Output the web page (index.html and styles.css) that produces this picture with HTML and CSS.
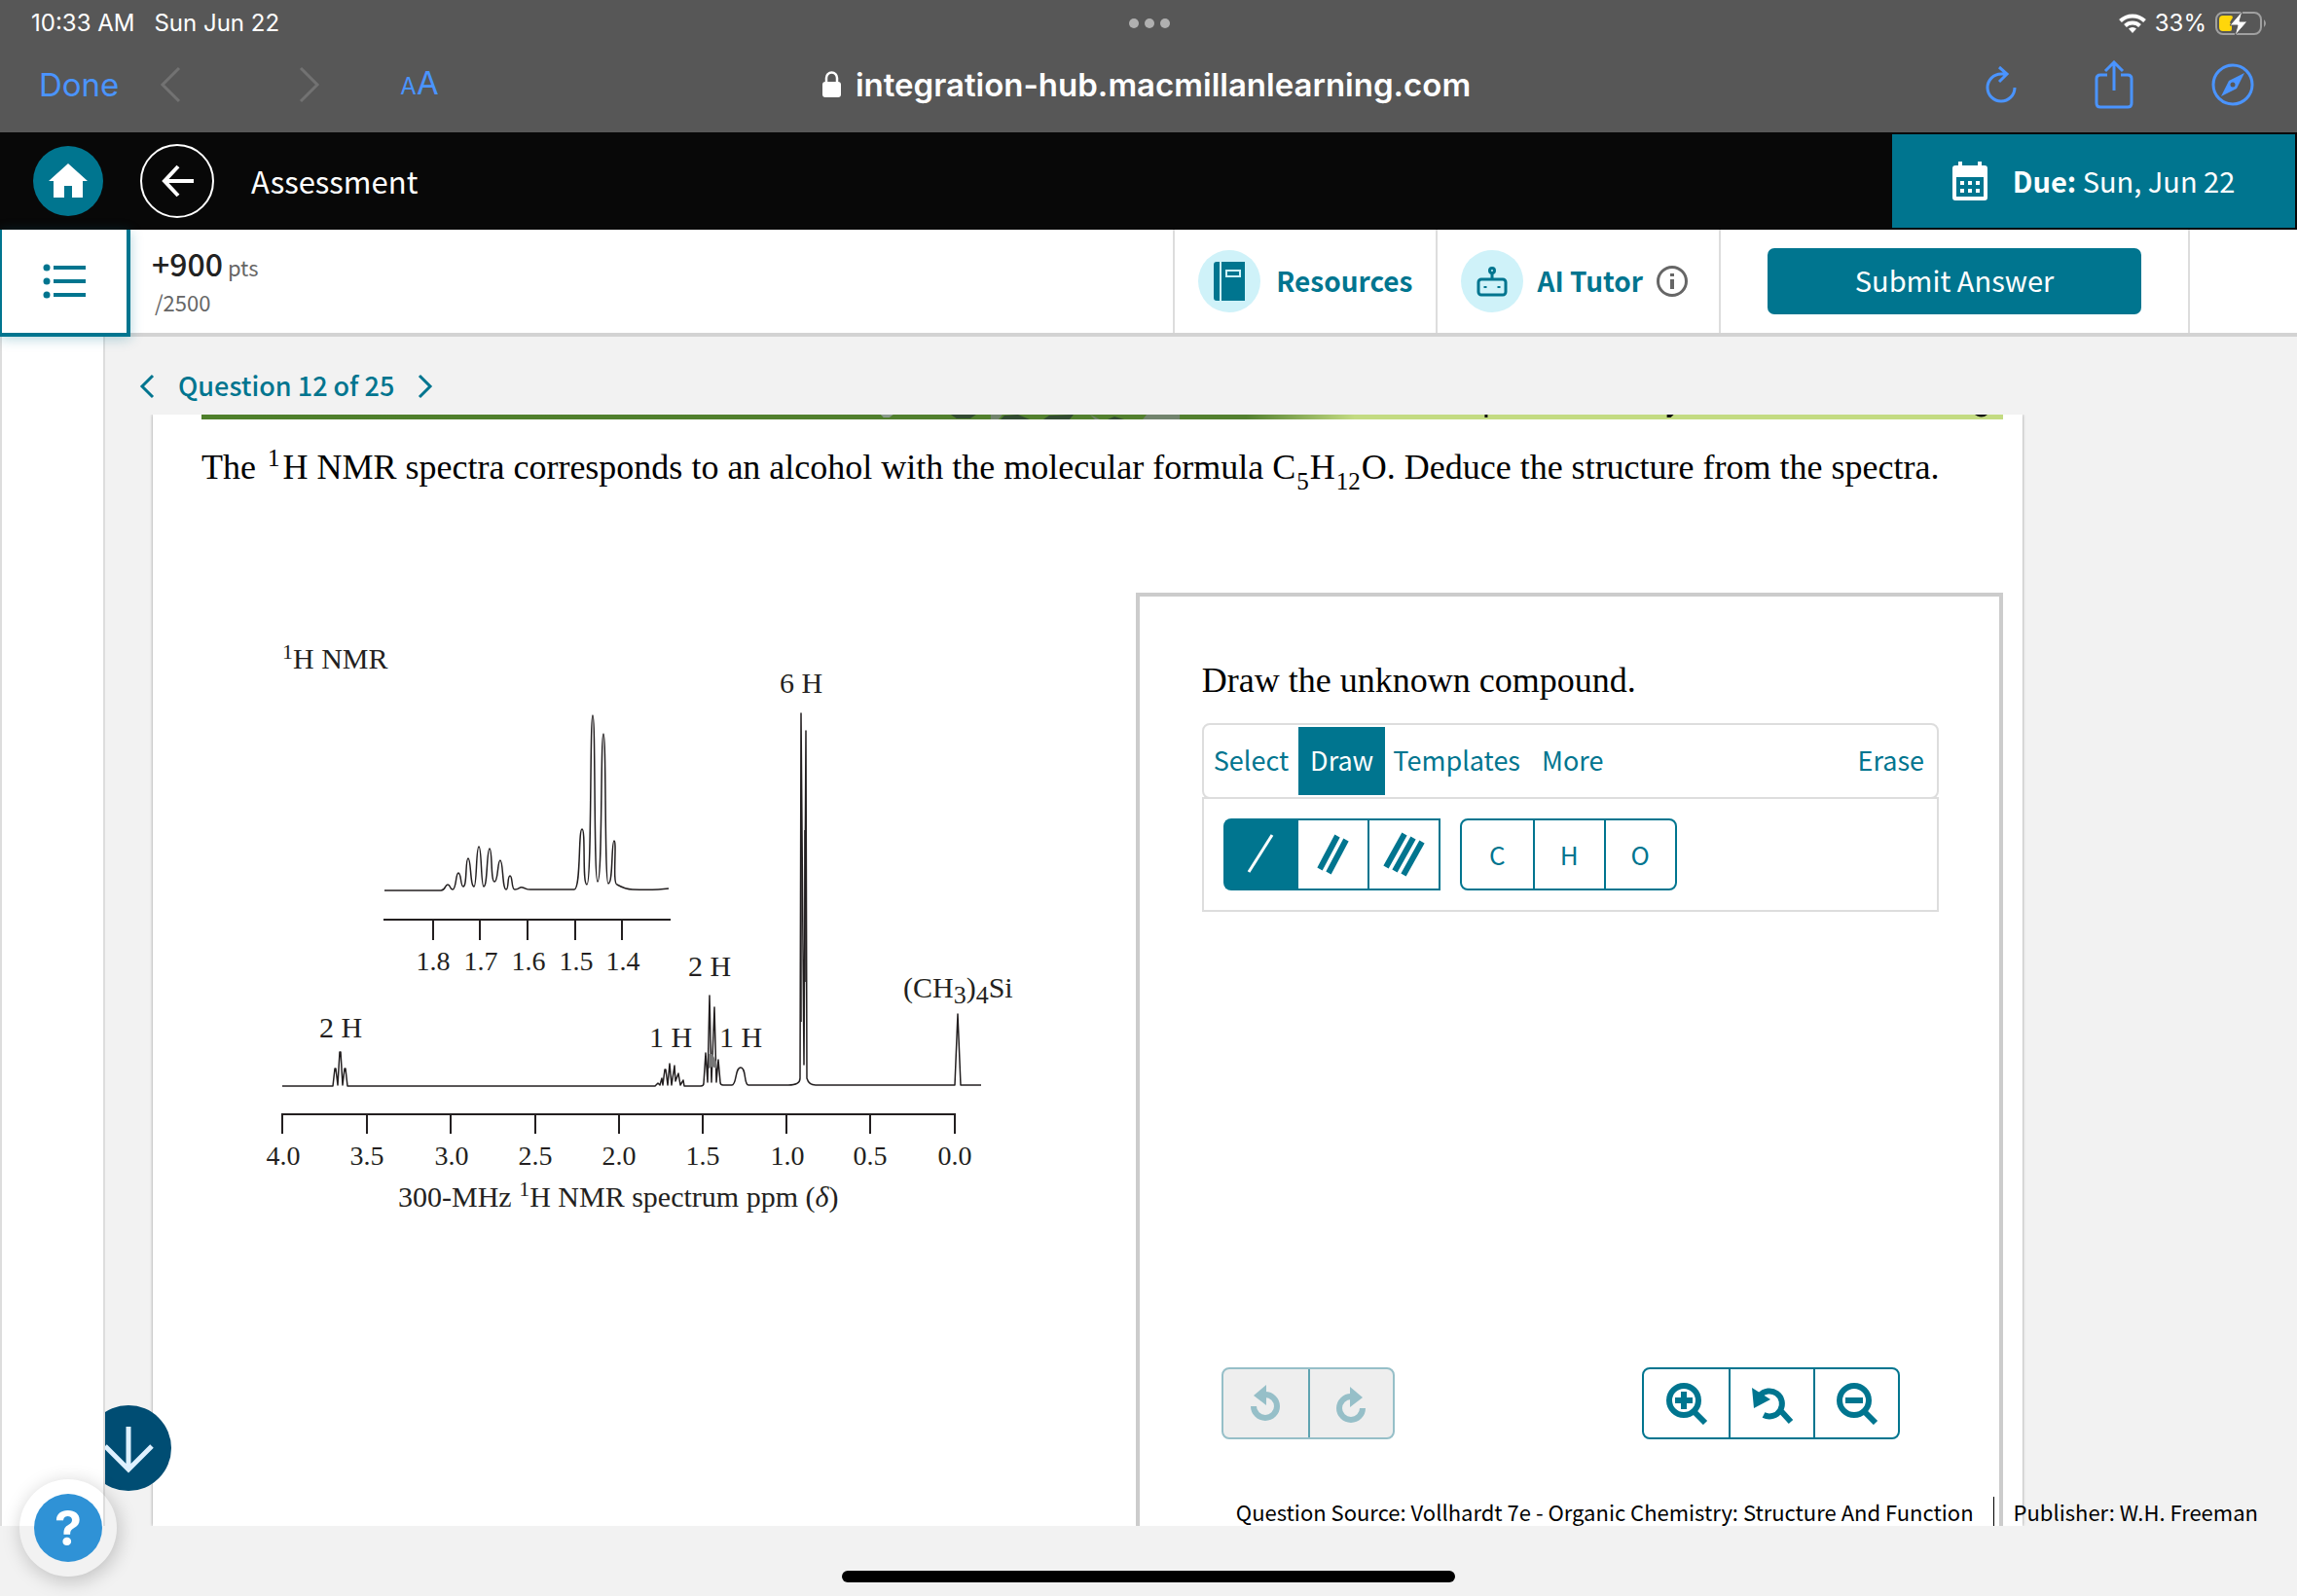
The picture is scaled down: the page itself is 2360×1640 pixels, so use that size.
FILE: index.html
```html
<!DOCTYPE html>
<html lang="en">
<head>
<meta charset="UTF-8">
<meta name="viewport" content="width=device-width, initial-scale=1.0">
<title>Assessment</title>
<link rel="stylesheet" href="styles.css">
</head>
<body>
<div class="browser">
    <div class="status">
        <div class="status-left"><span>10:33 AM</span><span>Sun Jun 22</span></div>
        <div class="dots"><i></i><i></i><i></i></div>
        <div class="status-right">
            <svg width="28" height="20" viewBox="0 0 28 20" fill="none" stroke="#fff" stroke-width="4"><path d="M1.5 7.5a18 18 0 0 1 25 0M6.5 12.5a11 11 0 0 1 15 0"/><path d="M14 20l-4-4.500a6 6 0 0 1 8 0z" fill="#fff" stroke="none"/></svg>
            <span>33%</span>
            <svg width="54" height="26" viewBox="0 0 54 26"><rect x="1" y="2" width="46" height="22" rx="7" fill="none" stroke="#a0a0a0" stroke-width="2"/><path d="M50 9q4 4 0 8z" fill="#a0a0a0"/><path d="M8 5h8q2 0 2 2l-3 5 2 3v4q0 2-2 2H8q-4 0-4-4V9q0-4 4-4z" fill="#ffd60a"/><path d="M28 0L15 15h8l-3 11 13-15h-8z" fill="#fff" stroke="#575757" stroke-width="1"/></svg>
        </div>
    </div>
    <div class="toolbar">
        <div class="tools-left">
            <button class="done">Done</button>
            <button class="step" aria-label="Back"><svg width="22" height="38" viewBox="0 0 22 38"><path d="M20 2L3 19l17 17"/></svg></button>
            <button class="step" aria-label="Forward"><svg width="22" height="38" viewBox="0 0 22 38"><path d="M2 2l17 17L2 36"/></svg></button>
            <button class="size" aria-label="Text size"><small>A</small>A</button>
        </div>
        <div class="address">
            <svg width="20" height="28" viewBox="0 0 20 28"><rect x="0" y="11" width="19" height="16" rx="3" fill="#fff"/><path d="M4 12V7a5.500 5.500 0 0 1 11 0v5" fill="none" stroke="#fff" stroke-width="2.500"/></svg>
            <span>integration-hub.macmillanlearning.com</span>
        </div>
        <div class="tools-right">
            <button aria-label="Reload"><svg width="32" height="40" viewBox="0 0 32 40"><path d="M30 23a14 14 0 1 1-14-14h6M14 2l8 7-8 8"/></svg></button>
            <button aria-label="Share"><svg width="40" height="50" viewBox="0 0 40 50"><path d="M13 15H6q-4 0-4 4v25q0 4 4 4h28q4 0 4-4V19q0-4-4-4h-7M20 31V3M11 11l9-9 9 9"/></svg></button>
            <button aria-label="Open in Safari"><svg width="44" height="44" viewBox="0 0 44 44"><circle cx="22" cy="22" r="20"/><path d="M34 10L26 26 10 34 18 18z" fill="#4a94ff" stroke="none"/><circle cx="22" cy="22" r="2.500" fill="#575757" stroke="none"/></svg></button>
        </div>
    </div>
</div>

<header class="topbar">
    <a class="home" href="#" aria-label="Home"><svg width="40" height="36" viewBox="0 0 40 36"><path d="M20 0l20 18h-5v17H24V23h-8v12H5V18H0z" fill="#fff"/></svg></a>
    <a class="back" href="#" aria-label="Back"><svg width="34" height="34" viewBox="0 0 34 34"><path d="M18 2L4 17l14 15M4 17h30" fill="none" stroke="#fff" stroke-width="4"/></svg></a>
    <h1>Assessment</h1>
    <div class="due">
        <svg width="36" height="40" viewBox="0 0 36 40"><path d="M6 0h4v4h16V0h4v4h3q3 0 3 3v30q0 3-3 3H3q-3 0-3-3V7q0-3 3-3h3z" fill="#fff"/><path d="M4 16h28v20H4z" fill="#00758f"/><path d="M8 20h4v4H8zM16 20h4v4h-4zM24 20h4v4h-4zM8 28h4v4H8zM16 28h4v4h-4zM24 28h4v4h-4z" fill="#fff"/></svg>
        <span><b>Due:</b> Sun, Jun 22</span>
    </div>
</header>

<div class="actions">
    <button class="list" aria-label="Question list"><svg width="44" height="36" viewBox="0 0 44 36" fill="#00758f"><circle cx="4" cy="4" r="3.500"/><circle cx="4" cy="18" r="3.500"/><circle cx="4" cy="32" r="3.500"/><path d="M11 2h33v4H11zM11 16h33v4H11zM11 30h33v4H11z"/></svg></button>
    <div class="points">
        <div><strong>+900</strong> pts</div>
        <div class="total">/2500</div>
    </div>
    <a class="action resources" href="#">
        <span class="bubble"><svg width="32" height="40" viewBox="0 0 32 40"><path d="M3 0h3v40H3q-3 0-3-3V3q0-3 3-3zM8 0h24v40H8z" fill="#00758f"/><path d="M13 9h14v6H13z" fill="none" stroke="#cff2f9" stroke-width="2"/></svg></span>
        <span class="label">Resources</span>
    </a>
    <a class="action tutor" href="#">
        <span class="bubble"><svg class="robot" width="32" height="32" viewBox="0 0 32 32" fill="none" stroke="#00758f" stroke-width="3"><rect x="2" y="14" width="28" height="16" rx="3"/><circle cx="16" cy="5" r="2.500"/><path d="M16 7v7M9 21v2M23 21v2"/></svg></span>
        <span class="label">AI Tutor</span>
        <svg width="32" height="32" viewBox="0 0 32 32"><circle cx="16" cy="16" r="14.500" fill="none" stroke="#666" stroke-width="3"/><path d="M14 8h4v3h-4zM14 14h4v10h-4z" fill="#666"/></svg>
    </a>
    <div class="submit-cell"><button class="submit">Submit Answer</button></div>
</div>

<div class="workspace">
    <aside class="rail"></aside>
    <main>
        <nav class="question-nav">
            <button aria-label="Previous question"><svg width="16" height="26" viewBox="0 0 16 26"><path d="M14 2L3 13l11 11"/></svg></button>
            <span class="label">Question 12 of 25</span>
            <button aria-label="Next question"><svg width="16" height="26" viewBox="0 0 16 26"><path d="M2 2l11 11L2 24"/></svg></button>
        </nav>
        <section class="sheet">
            <svg class="banner" viewBox="0 0 1849 5" preserveAspectRatio="none">
                <defs><linearGradient id="grass"><stop offset="0" stop-color="#4e7f2b"/><stop offset="0.580" stop-color="#53802f"/><stop offset="0.640" stop-color="#c3db82"/><stop offset="1" stop-color="#c3db82"/></linearGradient></defs>
                <path d="M0 0h1849v5H0z" fill="url(#grass)"/>
                <path d="M697 0h13l-4 3h-6z" fill="#8a9a8c"/>
                <path d="M769 0h26l-6 4h-14zM820 5l4-4 14-1 12 5zM864 5l6-4 25-1-4 5zM930 5l7-3 10 3z" fill="#324b31"/>
                <path d="M810 0h12l-4 5h-8zM912 0l10 5h-5zM970 0h34v5h-38z" fill="#72846d"/>
                <path d="M1317 0h3v3h-3zM1504 0h7l-3 3h-4zM1820 0h13q-6 5-13 0z" fill="#111"/>
            </svg>
            <p class="prompt">The <sup>1</sup>H NMR spectra corresponds to an alcohol with the molecular formula C<sub>5</sub>H<sub>12</sub>O. Deduce the structure from the spectra.</p>
            <div class="columns">
                <div class="figure">
                    <svg class="spectrum" viewBox="260 640 800 620" role="img" aria-label="NMR spectrum">
                        <g class="trace">
                            <!-- inset, 1.9 to 1.3 ppm -->
                            <path d="M395 915H453C458 915 457 909 460 909S462 914 465 914C469 914 468 897 471 897S473 911 476 911C480 911 478 882 481 882S483 911 487 911C490 911 489 870 492 870S494 911 497 911C501 911 500 872 503 872S504 906 508 906C512 906 511 884 514 884S516 914 520 914C523 914 521 900 524 900S525 914 529 914C534 914 533 911 537 912S540 914 545 914H590C597 914 594 852 598 852S598 909 603 909C608 909 606 735 609 735S610 906 614 906C619 906 617 754 620 754S621 908 625 908C630 908 628 864 631 864S629 909 634 909C641 913 644 914 650 914Q672 915 687 913"/>
                            <!-- full spectrum -->
                            <path d="M290 1116H342L344 1098 345 1098 347 1115 349 1081 350 1081 352 1115 354 1098 355 1098 357 1116H673L676 1113 678 1115 680 1108 681 1115 683 1099 684 1099 686 1115 688 1093 690 1115 693 1095 694 1111 697 1103 699 1115 702 1110 703 1116H720Q723 1116 723 1113L725 1082 727 1112 729 1023 731 1112 734 1035 736 1112 738 1089 740 1112Q740 1115 743 1115H752C757 1115 755 1097 761 1097S764 1115 769 1115H810Q822 1115 822 1108L823 733 826 1094 828 751 829 1108Q831 1115 838 1115H981L984 1042 987 1115H1008"/>
                            <path class="smudge" d="M728 1083h4l4 8v7l-4-2-4 2z"/>
                            <path d="M823 870v180M827 853v156"/>
                        </g>
                        <g class="axis">
                            <path d="M394 945H689M445 945v21M493 945v21M542 945v21M591 945v21M639 945v21"/>
                            <path d="M290 1165V1145H981V1165M377 1145v20M463 1145v20M550 1145v20M636 1145v20M722 1145v20M808 1145v20M894 1145v20"/>
                        </g>
                        <g class="ticks">
                            <text x="445" y="997">1.8</text><text x="494" y="997">1.7</text><text x="543" y="997">1.6</text><text x="592" y="997">1.5</text><text x="640" y="997">1.4</text>
                            <text x="291" y="1197">4.0</text><text x="377" y="1197">3.5</text><text x="464" y="1197">3.0</text><text x="550" y="1197">2.5</text><text x="636" y="1197">2.0</text><text x="722" y="1197">1.5</text><text x="809" y="1197">1.0</text><text x="894" y="1197">0.5</text><text x="981" y="1197">0.0</text>
                        </g>
                        <g class="labels">
                            <text x="290" y="687"><tspan class="raised" dy="-10">1</tspan><tspan dy="10">H NMR</tspan></text>
                            <text x="328" y="1066">2 H</text>
                            <text x="667" y="1076">1 H</text>
                            <text x="739" y="1076">1 H</text>
                            <text x="707" y="1003">2 H</text>
                            <text x="801" y="712">6 H</text>
                            <text x="928" y="1025">(CH<tspan class="lowered" dy="6">3</tspan><tspan dy="-6">)</tspan><tspan class="lowered" dy="6">4</tspan><tspan dy="-6">Si</tspan></text>
                            <text x="409" y="1240">300-MHz <tspan class="raised" dy="-11">1</tspan><tspan dy="11">H NMR spectrum ppm (</tspan><tspan font-style="italic">δ</tspan>)</text>
                        </g>
                    </svg>
                </div>
                <div class="editor">
                    <p class="task">Draw the unknown compound.</p>
                    <div class="tabs">
                        <button>Select</button>
                        <button class="active">Draw</button>
                        <button>Templates</button>
                        <button>More</button>
                        <button class="erase">Erase</button>
                    </div>
                    <div class="palette">
                        <div class="group">
                            <button class="active" aria-label="Single bond"><svg width="44" height="48" viewBox="0 0 44 48"><path d="M10 43L34 5" stroke="#fff" stroke-width="3"/></svg></button>
                            <button aria-label="Double bond"><svg width="44" height="48" viewBox="0 0 44 48"><path d="M9 40L27 6M18 44L36 10" stroke="#00758f" stroke-width="6"/></svg></button>
                            <button aria-label="Triple bond"><svg width="44" height="48" viewBox="0 0 44 48"><path d="M4 38L23 4M13 42L32 8M22 46L41 12" stroke="#00758f" stroke-width="6"/></svg></button>
                        </div>
                        <div class="group atoms">
                            <button>C</button>
                            <button>H</button>
                            <button>O</button>
                        </div>
                    </div>
                    <div class="controls">
                        <div class="group wide faded">
                            <button disabled aria-label="Undo"><svg width="36" height="42" viewBox="0 0 36 42"><path d="M6 24a12 12 0 1 0 12-12" fill="none" stroke="#96bfc8" stroke-width="6"/><path d="M19 2v21L6 13z" fill="#96bfc8"/></svg></button>
                            <button disabled aria-label="Redo"><svg width="36" height="42" viewBox="0 0 36 42"><path d="M30 26a12 12 0 1 1-12-12" fill="none" stroke="#96bfc8" stroke-width="6"/><path d="M17 4v21l13-10z" fill="#96bfc8"/></svg></button>
                        </div>
                        <div class="group wide">
                            <button aria-label="Zoom in"><svg width="44" height="44" viewBox="0 0 44 44" fill="none" stroke="#00758f" stroke-width="6"><circle cx="19" cy="19" r="15"/><path d="M29 30l12 12"/><path d="M10 19h18M19 10v18"/></svg></button>
                            <button aria-label="Reset zoom"><svg width="44" height="44" viewBox="0 0 44 44" fill="none" stroke="#00758f" stroke-width="6"><path d="M9 14a13 13 0 1 1 4 20M30 29l11 12"/><path d="M1 6l2 21 17-9z" fill="#00758f" stroke="none"/></svg></button>
                            <button aria-label="Zoom out"><svg width="44" height="44" viewBox="0 0 44 44" fill="none" stroke="#00758f" stroke-width="6"><circle cx="19" cy="19" r="15"/><path d="M29 30l12 12"/><path d="M10 19h18"/></svg></button>
                        </div>
                    </div>
                </div>
            </div>
        </section>
        <button class="jump" aria-label="Scroll down"><svg width="88" height="88" viewBox="0 0 88 88"><path d="M44 22v44M20 42l24 24 24-24" fill="none" stroke="#dff1ff" stroke-width="5"/></svg></button>
        <div class="source"><span>Question Source: Vollhardt 7e - Organic Chemistry: Structure And Function</span><span>Publisher: W.H. Freeman</span></div>
    </main>
</div>

<footer class="bottom"><div class="handle"></div></footer>
<button class="help" aria-label="Help"><span>?</span></button>
</body>
</html>
```
FILE: styles.css
```css
* {
    box-sizing: border-box;
}
body {
    margin: 0;
    height: 100vh;
    display: flex;
    flex-direction: column;
    overflow: hidden;
    position: relative;
    background: #f2f2f2;
    font-family: "Noto Sans CJK SC", "Open Sans", sans-serif;
    color: #222;
}
button {
    font: inherit;
    color: inherit;
    background: none;
    border: 0;
    padding: 0;
    cursor: pointer;
}
a {
    color: inherit;
    text-decoration: none;
}
svg {
    display: block;
    flex: none;
}

/* browser chrome */
.browser {
    height: 136px;
    flex: none;
    background: #575757;
    color: #fff;
    font-family: Inter, "Liberation Sans", sans-serif;
}
.status, .toolbar {
    display: grid;
    grid-template-columns: 1fr auto 1fr;
    align-items: center;
}
.status {
    height: 48px;
    padding: 0 30px 0 32px;
    font-size: 24px;
    line-height: 28px;
}
.status-left {
    display: flex;
    gap: 20px;
}
.dots {
    display: flex;
    gap: 6px;
}
.dots i {
    width: 10px;
    height: 10px;
    border-radius: 50%;
    background: #b0b0b0;
}
.status-right {
    display: flex;
    justify-content: flex-end;
    align-items: center;
    gap: 9px;
}
.toolbar {
    height: 78px;
    padding: 0 44px 0 40px;
    color: #4a94ff;
    font-size: 33px;
    line-height: 40px;
}
.tools-left, .tools-right {
    display: flex;
    align-items: center;
}
.done {
    margin-right: 42px;
}
.step {
    margin-right: 121px;
}
.step + .step {
    margin-right: 82px;
}
.step path {
    fill: none;
    stroke: #727272;
    stroke-width: 3;
}
.size small {
    font-size: 24px;
}
.address {
    display: flex;
    align-items: center;
    gap: 14px;
    color: #fff;
    font-weight: 600;
}
.tools-right {
    justify-content: flex-end;
    gap: 80px;
}
.tools-right svg {
    fill: none;
    stroke: #4a94ff;
    stroke-width: 3;
}

/* black header */
.topbar {
    height: 100px;
    flex: none;
    display: flex;
    align-items: center;
    padding: 2px 2px 2px 34px;
    background: #080808;
    color: #fff;
}
.home, .back {
    display: flex;
    align-items: center;
    justify-content: center;
    border-radius: 50%;
}
.home {
    width: 72px;
    height: 72px;
    background: #00758f;
}
.back {
    width: 76px;
    height: 76px;
    margin: 0 38px;
    border: 2px solid #fff;
}
.topbar h1 {
    margin: 0;
    font-size: 31px;
    line-height: 40px;
    font-weight: 400;
}
.due {
    margin-left: auto;
    width: 414px;
    height: 96px;
    display: flex;
    align-items: center;
    justify-content: center;
    gap: 26px;
    background: #00758f;
    font-size: 29px;
    line-height: 40px;
}
.due span, .label {
    padding-bottom: 2px;
}

/* points and actions */
.actions {
    height: 110px;
    flex: none;
    display: flex;
    position: relative;
    z-index: 1;
    background: #fff;
    border-bottom: 4px solid #d3d3d3;
    padding-right: 110px;
}
.list {
    width: 134px;
    height: 110px;
    display: flex;
    align-items: center;
    justify-content: center;
    border: solid #00758f;
    border-width: 0 4px 4px 2px;
    box-shadow: 0 2px 12px rgba(0,117,143,0.3);
}
.points {
    flex: 1;
    padding: 16px 22px;
    font-size: 22px;
    line-height: 36px;
    color: #666;
}
.points strong {
    font-size: 32px;
    font-weight: 500;
    color: #222;
}
.points .total {
    padding-left: 3px;
}
.action {
    display: flex;
    align-items: center;
    padding: 0 24px;
    gap: 16px;
    border-left: 2px solid #ddd;
    font-size: 28px;
    line-height: 40px;
    font-weight: 700;
    color: #00758f;
}
.action.tutor {
    padding-right: 32px;
    gap: 14px;
}
.bubble {
    width: 64px;
    height: 64px;
    border-radius: 50%;
    display: flex;
    align-items: center;
    justify-content: center;
    background: #cff2f9;
}
.submit-cell {
    display: flex;
    align-items: center;
    padding: 0 48px;
    border: solid #ddd;
    border-width: 0 2px;
}
.submit {
    width: 384px;
    height: 68px;
    padding-bottom: 4px;
    border-radius: 7px;
    background: #00758f;
    color: #fff;
    font-size: 29px;
}

/* work area */
.workspace {
    flex: 1;
    min-height: 0;
    display: flex;
}
.rail {
    width: 108px;
    background: #fff;
    border: solid #ddd;
    border-width: 0 2px;
}
main {
    flex: 1;
    min-width: 0;
    display: flex;
    flex-direction: column;
    position: relative;
    overflow: hidden;
}
.question-nav {
    height: 80px;
    flex: none;
    display: flex;
    align-items: center;
    gap: 24px;
    padding: 22px 35px 0;
    color: #00758f;
    font-size: 27px;
    line-height: 40px;
    font-weight: 500;
}
.question-nav path {
    fill: none;
    stroke: #00758f;
    stroke-width: 3;
}
.sheet {
    flex: 1;
    min-height: 0;
    margin: 0 282px 0 49px;
    padding: 0 20px 0 50px;
    display: flex;
    flex-direction: column;
    background: #fff;
    box-shadow: 0 0 3px rgba(0,0,0,0.4);
    clip-path: inset(0 -4px);
    color: #000;
}
.banner {
    width: 100%;
    height: 5px;
}
.prompt, .task {
    margin: 0;
    font-family: "Liberation Serif", "Times New Roman", serif;
    font-size: 36px;
    line-height: 48px;
}
.prompt {
    padding: 25px 0 105px;
}
.prompt sup, .prompt sub {
    margin: 0 3px;
    font-size: 25px;
    line-height: 0;
}
.prompt sub {
    margin: 0 1px;
    vertical-align: -11px;
}
.columns {
    flex: 1;
    min-height: 0;
    display: grid;
    grid-template-columns: 14fr 13fr;
}
.figure {
    padding: 31px 53px;
}
.spectrum {
    width: 100%;
    max-width: 800px;
}
.trace path {
    fill: none;
    stroke: #231f20;
    stroke-width: 1.5;
    stroke-linejoin: round;
}
.trace .smudge {
    fill: #777;
    stroke: none;
}
.axis path {
    fill: none;
    stroke: #231f20;
    stroke-width: 2;
}
.ticks, .labels {
    font-family: "Liberation Serif", "Times New Roman", serif;
    fill: #231f20;
}
.ticks {
    font-size: 28px;
    text-anchor: middle;
}
.labels {
    font-size: 30px;
}
.labels .raised {
    font-size: 22px;
}
.labels .lowered {
    font-size: 26px;
}
.editor {
    display: flex;
    flex-direction: column;
    padding: 62px 62px 89px 64px;
    border: 4px solid #ccc;
    border-bottom: 0;
}
.tabs {
    display: flex;
    align-items: center;
    margin-top: 20px;
    padding: 0 3px 0 0;
    height: 78px;
    border: 2px solid #ddd;
    border-radius: 8px;
    color: #00758f;
    font-size: 27px;
    line-height: 40px;
}
.tabs button {
    height: 70px;
    padding: 0 10px 2px;
}
.tabs .active {
    padding: 0 12px 2px;
}
.tabs .active + button {
    padding: 0 12px 2px 8px;
}
.tabs .erase {
    margin-left: auto;
}
.active {
    background: #00758f;
    color: #fff;
}
.palette {
    display: flex;
    gap: 20px;
    margin-top: -2px;
    padding: 20px;
    height: 118px;
    border: 2px solid #ddd;
}
.group {
    display: flex;
    height: 74px;
    border: 2px solid #00758f;
    border-radius: 8px 0 0 8px;
}
.group button {
    width: 73px;
    display: flex;
    align-items: center;
    justify-content: center;
    padding-bottom: 2px;
    color: #00758f;
    font-size: 26px;
}
.group button + button {
    border-left: 2px solid #00758f;
}
.atoms, .wide {
    border-radius: 8px;
}
.wide button {
    width: 87px;
    padding: 0;
}
.faded {
    border-color: #96bfc8;
    background: #eee;
}
.faded button + button {
    border-color: #5fa3b1;
}
.controls {
    display: flex;
    justify-content: space-between;
    margin-top: auto;
    padding: 0 40px 0 20px;
}

/* floating items */
.jump {
    position: absolute;
    left: -20px;
    bottom: 36px;
    width: 88px;
    height: 88px;
    border-radius: 50%;
    background: #004d73;
}
.source {
    position: absolute;
    right: 40px;
    bottom: 0;
    display: flex;
    color: #000;
    font-size: 22px;
    line-height: 30px;
}
.source span + span {
    margin-left: 20px;
    padding-left: 20px;
    border-left: 1px solid #000;
}
.bottom {
    height: 72px;
    flex: none;
    display: flex;
    justify-content: center;
    align-items: flex-end;
    padding-bottom: 14px;
}
.handle {
    width: 630px;
    height: 12px;
    border-radius: 6px;
    background: #000;
}
.help {
    position: absolute;
    z-index: 2;
    left: 20px;
    bottom: 20px;
    width: 100px;
    height: 100px;
    border-radius: 50%;
    display: flex;
    align-items: center;
    justify-content: center;
    box-shadow: 2px 4px 20px rgba(0,0,0,0.22);
}
.help span {
    width: 70px;
    height: 70px;
    border-radius: 50%;
    background: #2f92d6;
    color: #fff;
    font: bold 50px/70px Inter, sans-serif;
}
```
